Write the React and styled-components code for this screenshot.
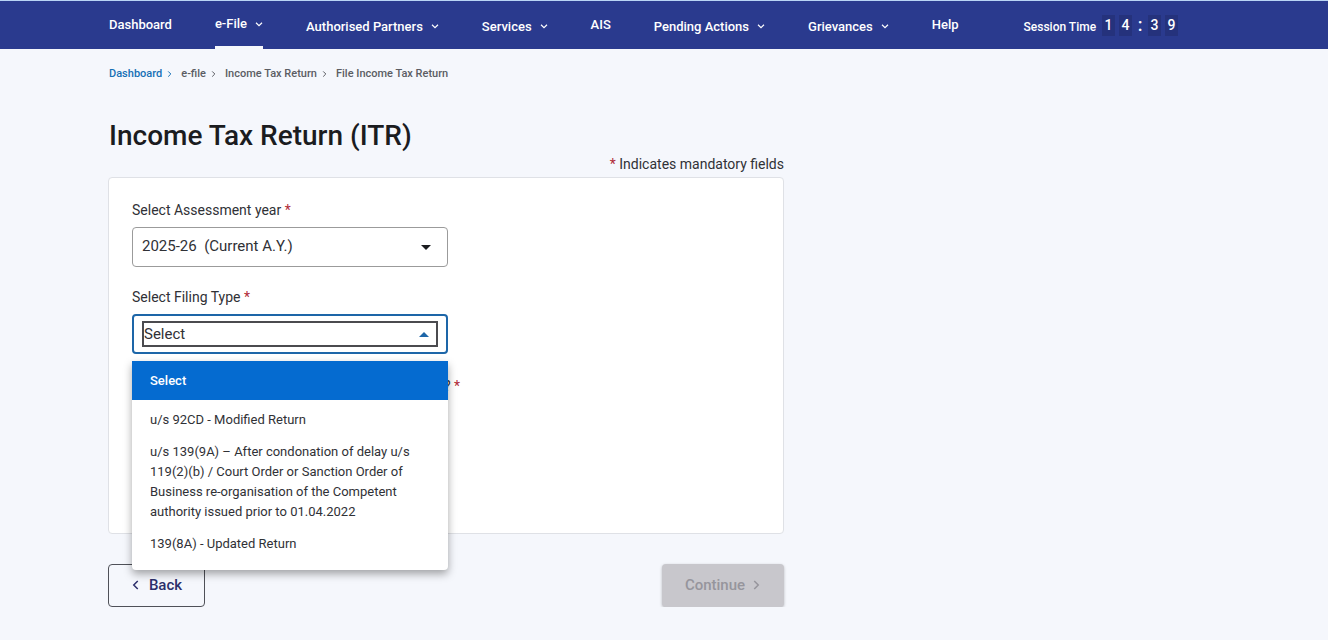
import {useState} from 'react'
import styled, {createGlobalStyle, css} from 'styled-components'

const navItems = [
    {label: 'Dashboard'},
    {label: 'e-File', menu: true, active: true},
    {label: 'Authorised Partners', menu: true},
    {label: 'Services', menu: true},
    {label: 'AIS'},
    {label: 'Pending Actions', menu: true},
    {label: 'Grievances', menu: true},
    {label: 'Help'},
]

const crumbs = ['Dashboard', 'e-file', 'Income Tax Return', 'File Income Tax Return']

const filingTypes = [
    'Select',
    'u/s 92CD - Modified Return',
    'u/s 139(9A) – After condonation of delay u/s 119(2)(b) / Court Order or Sanction Order of Business re-organisation of the Competent authority issued prior to 01.04.2022',
    '139(8A) - Updated Return',
]

const Chevron = ({dir = 'down', size = 8, weight = 1.2}) => {
    const paths = {
        down: 'M1 2.8 L4 5.6 L7 2.8',
        right: 'M2.6 0.8 L5.8 4 L2.6 7.2',
        left: 'M5.4 0.8 L2.2 4 L5.4 7.2',
        smallRight: 'M2.2 1.4 L4.8 4 L2.2 6.6',
    }
    return (
        <svg width={size} height={size} viewBox='0 0 8 8' fill='none' stroke='currentColor' strokeWidth={weight} aria-hidden='true'>
            <path d={paths[dir]} />
        </svg>
    )
}

const App = () => {

    const [year, setYear] = useState('2025-26')
    const [filing, setFiling] = useState(filingTypes[0])
    const [open, setOpen] = useState(true)

    const pick = type => {
        setFiling(type)
        setOpen(false)
    }

    return (
        <>
        <GlobalStyle />

        <TopBar>
        <Container>
        <Nav>
        {navItems.map(item => (
            item.menu
                ? <NavButton key={item.label} type='button' $active={item.active}>{item.label}<Chevron /></NavButton>
                : <NavLink key={item.label} href='#'>{item.label}</NavLink>
        ))}
        <Session>
        <span>Session Time</span>
        <Clock>
        <Digit>1</Digit>
        <Digit>4</Digit>
        <Colon>:</Colon>
        <Digit>3</Digit>
        <Digit>9</Digit>
        </Clock>
        </Session>
        </Nav>
        </Container>
        </TopBar>

        <Container>
        <Crumbs aria-label='Breadcrumb'>
        {crumbs.map((crumb, i) => (
            <Crumb key={crumb} href='#' $home={i === 0}>
                {crumb}
                {i < crumbs.length - 1 && <Chevron dir='smallRight' weight={1} />}
            </Crumb>
        ))}
        </Crumbs>

        <Main>
        <Title>Income Tax Return (ITR)</Title>
        <Mandatory><Star>*</Star> Indicates mandatory fields</Mandatory>

        <Card>
        <Field>
        <Label htmlFor='year'>Select Assessment year <Star>*</Star></Label>
        <SelectBox>
        <Select id='year' value={year} onChange={e => setYear(e.target.value)}>
            <option value='2025-26'>2025-26&nbsp; (Current A.Y.)</option>
            <option value='2024-25'>2024-25</option>
        </Select>
        <Arrow viewBox='0 0 10 5' aria-hidden='true'><path d='M0 0 H10 L5 5 Z' /></Arrow>
        </SelectBox>
        </Field>

        <Field>
        <Label htmlFor='filing'>Select Filing Type <Star>*</Star></Label>
        <SelectBox $open={open}>
        <Select
            id='filing'
            $open={open}
            value={filing}
            onMouseDown={e => { e.preventDefault(); setOpen(!open) }}
            onChange={e => setFiling(e.target.value)}
        >
            {filingTypes.map(type => <option key={type}>{type}</option>)}
        </Select>
        <Arrow $open={open} viewBox='0 0 10 5' aria-hidden='true'><path d='M0 5 H10 L5 0 Z' /></Arrow>
        {open && (
            <Menu role='listbox' aria-label='Filing type'>
            {filingTypes.map(type => (
                <Option
                    key={type}
                    type='button'
                    role='option'
                    aria-selected={type === filing}
                    $selected={type === filing}
                    onClick={() => pick(type)}
                >
                    {type}
                </Option>
            ))}
            </Menu>
        )}
        </SelectBox>
        </Field>

        <Question>? <Star>*</Star></Question>
        </Card>

        <Actions>
        <BackButton type='button'><Chevron dir='left' size={10} />Back</BackButton>
        <ContinueButton type='button' disabled>Continue<Chevron dir='right' size={10} /></ContinueButton>
        </Actions>
        </Main>
        </Container>
        </>
    )
}

export default App


const GlobalStyle = createGlobalStyle`
* {
    box-sizing: border-box;
}

body {
    margin: 0;
    background-color: #f5f7fc;
    color: #303136;
    font-family: Roboto, sans-serif;
    font-size: 14px;
}

button, select {
    font-family: inherit;
}
`

const Container = styled.div`
    width: 100%;
    max-width: 1112px;
    margin: 0 auto;
`

const TopBar = styled.header`
    background-color: #2a3a8e;
    border-top: 1px solid #b9d4f5;
`

const Nav = styled.nav`
    display: flex;
    align-items: center;
    gap: 43px;
    height: 48px;
    padding-left: 1px;
    color: white;
`

const navItem = css`
    display: flex;
    align-items: center;
    height: 48px;
    padding: 0;
    border: 0;
    background: none;
    color: white;
    font-size: 13px;
    font-weight: 500;
    white-space: nowrap;
    text-decoration: none;
`

const NavLink = styled.a`
    ${navItem}
    border-bottom: 2px solid transparent;
`

const NavButton = styled.button`
    ${navItem}
    gap: 8px;
    ${p => p.$active ? 'border-bottom: 3px solid #f5f7fc;' : 'padding-top: 2px;'}
`

const Session = styled.div`
    display: flex;
    align-items: center;
    gap: 6px;
    margin-left: 22px;
    padding-top: 3px;
    font-size: 12px;
    font-weight: 500;
    white-space: nowrap;
`

const Clock = styled.div`
    display: flex;
    align-items: center;
    gap: 4px;
    padding-bottom: 3px;
    font-size: 14px;
`

const Digit = styled.span`
    width: 13px;
    line-height: 21px;
    text-align: center;
    background-color: #25327c;
`

const Colon = styled.span`
    width: 8px;
    text-align: center;
    font-size: 18px;
    line-height: 20px;
`

const Crumbs = styled.nav`
    display: flex;
    gap: 7px;
    padding: 17px 0 0 1px;
`

const Crumb = styled.a`
    display: flex;
    align-items: center;
    gap: 4px;
    color: ${p => p.$home ? '#1670b5' : '#5b5d63'};
    font-size: 11px;
    font-weight: 500;
    line-height: 16px;
    text-decoration: none;
`

const Main = styled.main`
    max-width: 676px;
`

const Title = styled.h1`
    margin: 36px 0 0;
    padding-left: 1px;
    color: #1b1c1f;
    font-size: 28px;
    font-weight: 500;
    line-height: 36px;
`

const Mandatory = styled.p`
    margin: 0 0 3px;
    text-align: right;
    line-height: 20px;
`

const Star = styled.span`
    color: #b02a37;
`

const Card = styled.section`
    min-height: 357px;
    padding: 22px 23px;
    background-color: white;
    border: 1px solid #dfe1e6;
    border-radius: 4px;
`

const Field = styled.div`
    width: 316px;
    max-width: 100%;
    margin-bottom: 20px;
`

const Label = styled.label`
    display: block;
    margin-bottom: 7px;
    line-height: 20px;
`

const Question = styled.p`
    width: 328px;
    margin: 0;
    padding-top: 2px;
    text-align: right;
    line-height: 20px;
`

const SelectBox = styled.div`
    position: relative;
    display: flex;
    align-items: center;
    height: 40px;
    padding: ${p => p.$open ? '0 8px' : '0 9px'};
    border: ${p => p.$open ? '2px solid #1d66a8' : '1px solid #9b9b9b'};
    border-radius: 4px;
    background-color: white;
`

const Select = styled.select`
    appearance: none;
    width: 100%;
    height: 26px;
    padding: ${p => p.$open ? '0' : '0 0 2px'};
    border: ${p => p.$open ? '2px solid #4b4b4f' : '0'};
    outline: none;
    background: none;
    color: #303136;
    font-size: 15px;
`

const Arrow = styled.svg`
    position: absolute;
    right: ${p => p.$open ? '17px' : '16px'};
    width: 10px;
    height: 5px;
    fill: ${p => p.$open ? '#1d66a8' : '#1b1c1f'};
    pointer-events: none;
`

const Menu = styled.div`
    position: absolute;
    top: 45px;
    left: -2px;
    right: -2px;
    z-index: 2;
    padding-bottom: 10px;
    background-color: white;
    border-radius: 0 0 4px 4px;
    box-shadow: 0 4px 8px rgba(0, 0, 0, 0.35);
`

const Option = styled.button`
    display: block;
    width: 100%;
    padding: ${p => p.$selected ? '10px 18px 9px' : '6px 18px'};
    border: 0;
    background-color: ${p => p.$selected ? '#056bd0' : 'white'};
    color: ${p => p.$selected ? 'white' : '#303136'};
    font-size: 13px;
    font-weight: ${p => p.$selected ? 500 : 400};
    line-height: 20px;
    text-align: left;

    &:nth-child(2) {
        padding-top: 10px;
    }
`

const Actions = styled.div`
    display: flex;
    justify-content: space-between;
    margin-top: 30px;
`

const actionButton = css`
    display: flex;
    align-items: center;
    justify-content: center;
    height: 43px;
    padding: 0 0 2px;
    border-radius: 4px;
    font-size: 15px;
    font-weight: 500;
`

const BackButton = styled.button`
    ${actionButton}
    gap: 8px;
    width: 97px;
    border: 1px solid #4f5158;
    background: none;
    color: #2c2f6b;
`

const ContinueButton = styled.button`
    ${actionButton}
    gap: 6px;
    width: 122px;
    border: 0;
    background-color: #c8c7cc;
    box-shadow: 0 1px 3px rgba(0, 0, 0, 0.25);
    color: #96959c;
`
